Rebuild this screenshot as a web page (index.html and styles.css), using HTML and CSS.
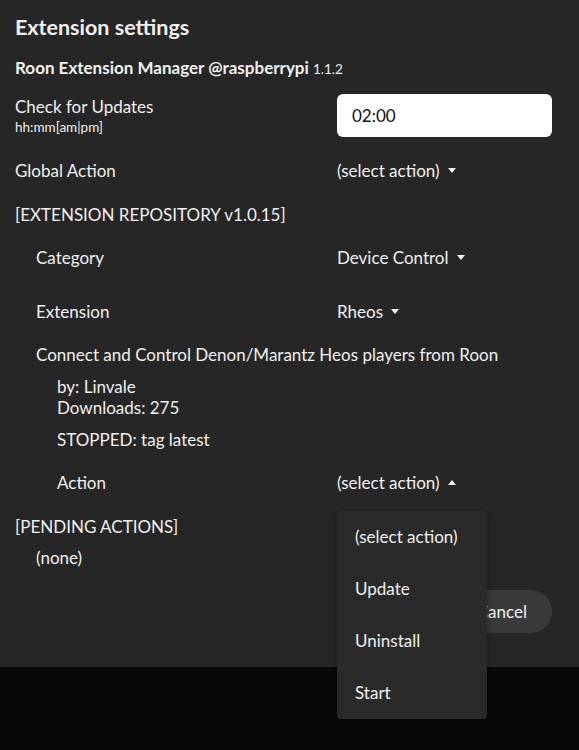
FILE: index.html
```html
<!DOCTYPE html>
<html>
<head>
<meta charset="utf-8">
<link rel="stylesheet" href="styles.css">
</head>
<body>
<div class="panel">
  <h1 class="title">Extension settings</h1>
  <div class="app">Roon Extension Manager @raspberrypi <span class="ver">1.1.2</span></div>

  <div class="row updates">
    <div class="label">
      <div>Check for Updates</div>
      <div class="sub">hh:mm[am|pm]</div>
    </div>
    <div class="value"><div class="input">02:00</div></div>
  </div>

  <div class="row global">
    <div class="label">Global Action</div>
    <div class="value"><span class="sel">(select action)<span class="tri down"></span></span></div>
  </div>

  <div class="line repo">[EXTENSION REPOSITORY v1.0.15]</div>

  <div class="row category">
    <div class="label ind1">Category</div>
    <div class="value"><span class="sel">Device Control<span class="tri down"></span></span></div>
  </div>

  <div class="row extension">
    <div class="label ind1">Extension</div>
    <div class="value"><span class="sel">Rheos<span class="tri down"></span></span></div>
  </div>

  <div class="line ind1 desc">Connect and Control Denon/Marantz Heos players from Roon</div>
  <div class="line ind2 meta">by: Linvale<br>Downloads: 275</div>
  <div class="line ind2 status">STOPPED: tag latest</div>

  <div class="row action">
    <div class="label ind2">Action</div>
    <div class="value"><span class="sel">(select action)<span class="tri up"></span></span></div>
  </div>

  <div class="line pending">[PENDING ACTIONS]</div>
  <div class="line ind1 none">(none)</div>

  <div class="buttons">
    <button class="btn">Cancel</button>
  </div>
</div>

<ul class="menu">
  <li>(select action)</li>
  <li>Update</li>
  <li>Uninstall</li>
  <li>Start</li>
</ul>
</body>
</html>
```

FILE: styles.css
```css
html, body {
  margin: 0;
  padding: 0;
}
body {
  background: #080808;
  font-family: Lato, "Noto Sans", sans-serif;
  font-size: 17px;
  line-height: 20px;
  color: #f0f0f0;
  width: 579px;
  height: 750px;
  overflow: hidden;
  position: relative;
}
.panel {
  background: #262626;
  height: 667px;
  box-sizing: border-box;
  padding: 15px 15px 0 15px;
  display: flex;
  flex-direction: column;
}
.title {
  margin: 0;
  font-size: 21.5px;
  line-height: 24px;
  font-weight: 700;
}
.app {
  margin-top: 19px;
  font-weight: 700;
}
.ver {
  font-weight: 400;
  font-size: 13.5px;
}
.row {
  display: grid;
  grid-template-columns: 1fr 227px;
  align-items: center;
}
.sub {
  margin-top: 3px;
  font-size: 13.5px;
  line-height: 15px;
}
.input {
  width: 215px;
  height: 43px;
  box-sizing: border-box;
  background: #ffffff;
  border-radius: 6px;
  color: #111;
  padding: 0 15px;
  display: flex;
  align-items: center;
}
.sel {
  display: inline-flex;
  align-items: center;
}
.tri {
  display: inline-block;
  width: 0;
  height: 0;
  margin-left: 8px;
  border-left: 4.5px solid transparent;
  border-right: 4.5px solid transparent;
}
.tri.down { border-top: 5px solid #f0f0f0; }
.tri.up { border-bottom: 5px solid #f0f0f0; }
.ind1 { padding-left: 21px; }
.ind2 { padding-left: 42px; }
.updates { margin-top: 15px; }
.global { margin-top: 23.5px; }
.repo { margin-top: 24px; }
.category { margin-top: 23px; }
.extension { margin-top: 34px; }
.desc { margin-top: 23px; }
.meta { margin-top: 11.5px; line-height: 21px; }
.status { margin-top: 11.5px; }
.action { margin-top: 23px; }
.pending { margin-top: 24px; }
.none { margin-top: 11px; }
.buttons {
  margin-top: 22.5px;
  display: flex;
  justify-content: flex-end;
  padding-right: 12px;
}
.btn {
  height: 43px;
  border: none;
  border-radius: 22px;
  background: #3a3a3a;
  color: #f0f0f0;
  font-family: inherit;
  font-size: 17px;
  line-height: 20px;
  padding: 0 25px;
}
.menu {
  position: absolute;
  left: 337px;
  top: 511px;
  width: 150px;
  margin: 0;
  padding: 0;
  list-style: none;
  background: #2a2a2a;
  border-radius: 4px;
  box-shadow: 0 2px 8px rgba(0, 0, 0, 0.35);
}
.menu li {
  height: 52px;
  padding-left: 18px;
  display: flex;
  align-items: center;
}
```
